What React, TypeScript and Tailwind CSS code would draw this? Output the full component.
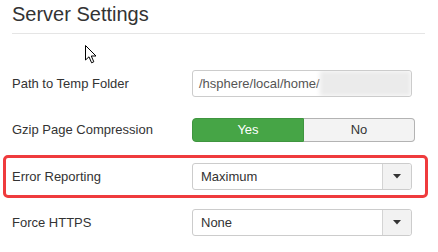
import { ReactNode } from "react"

const font = { fontFamily: '"Liberation Sans", Arial, sans-serif' }

function Caret() {
  return (
    <div className="flex h-full w-[29px] items-center justify-center border-l border-[#d4d4d4] bg-[#f2f2f2] rounded-r-[3px]">
      <svg width="8" height="5" viewBox="0 0 8 5">
        <path d="M0 0 L8 0 L4 4.5 Z" fill="#333" />
      </svg>
    </div>
  )
}

function Select({ value }: { value: string }) {
  return (
    <div className="flex h-[27px] w-[220px] items-center rounded-[3px] border border-[#cccccc] bg-white">
      <span className="flex-1 pl-[8px] text-[13px] text-[#333]">{value}</span>
      <Caret />
    </div>
  )
}

function Row({ label, children, className = "" }: { label: string; children: ReactNode; className?: string }) {
  return (
    <div className={"flex items-center " + className}>
      <div className="w-[180px] text-[13px] text-[#333]">{label}</div>
      {children}
    </div>
  )
}

export default function App() {
  return (
    <div className="relative h-[252px] w-[438px] overflow-hidden bg-white" style={font}>
      <div className="px-3 pt-[2px]">
        <h2 className="text-[20px] leading-[24px] text-[#333]">Server Settings</h2>
        <div className="mt-[7px] h-px w-[413px] bg-[#e5e5e5]" />

        <Row label="Path to Temp Folder" className="mt-[26px] h-[47px]">
          <div className="flex h-[27px] w-[220px] items-stretch overflow-hidden rounded-[3px] border border-[#cccccc] bg-white">
            <span className="flex items-center pl-[6px] text-[13px] text-[#555]">/hsphere/local/home/</span>
            <div className="flex-1 bg-[#ebebeb] blur-[2px]" />
          </div>
        </Row>

        <Row label="Gzip Page Compression" className="h-[46px]">
          <div className="flex h-[24px] w-[223px] text-[13px]">
            <div className="flex w-[112px] items-center justify-center rounded-l-[4px] border border-[#3f953f] bg-[#46a546] text-white">
              Yes
            </div>
            <div className="flex flex-1 items-center justify-center rounded-r-[4px] border border-l-0 border-[#b3b3b3] bg-[#f3f3f3] text-[#333]">
              No
            </div>
          </div>
        </Row>

        <div className="-ml-[9px] mt-[2px] flex h-[43px] w-[425px] items-center rounded-[5px] border-[3px] border-[#ef3b3d] pl-[6px]">
          <div className="w-[180px] text-[13px] text-[#333]">Error Reporting</div>
          <Select value="Maximum" />
        </div>

        <Row label="Force HTTPS" className="mt-px h-[47px]">
          <Select value="None" />
        </Row>
      </div>

      {/* mouse pointer over the page */}
      <svg className="absolute left-[85px] top-[45px]" width="13" height="19" viewBox="0 0 13 19">
        <path d="M0.5 0.5 L0.5 15 L4 11.8 L6.6 17.8 L8.8 16.8 L6.3 11 L11 11 Z" fill="white" stroke="black" strokeWidth="1" strokeLinejoin="miter" />
      </svg>
    </div>
  )
}
